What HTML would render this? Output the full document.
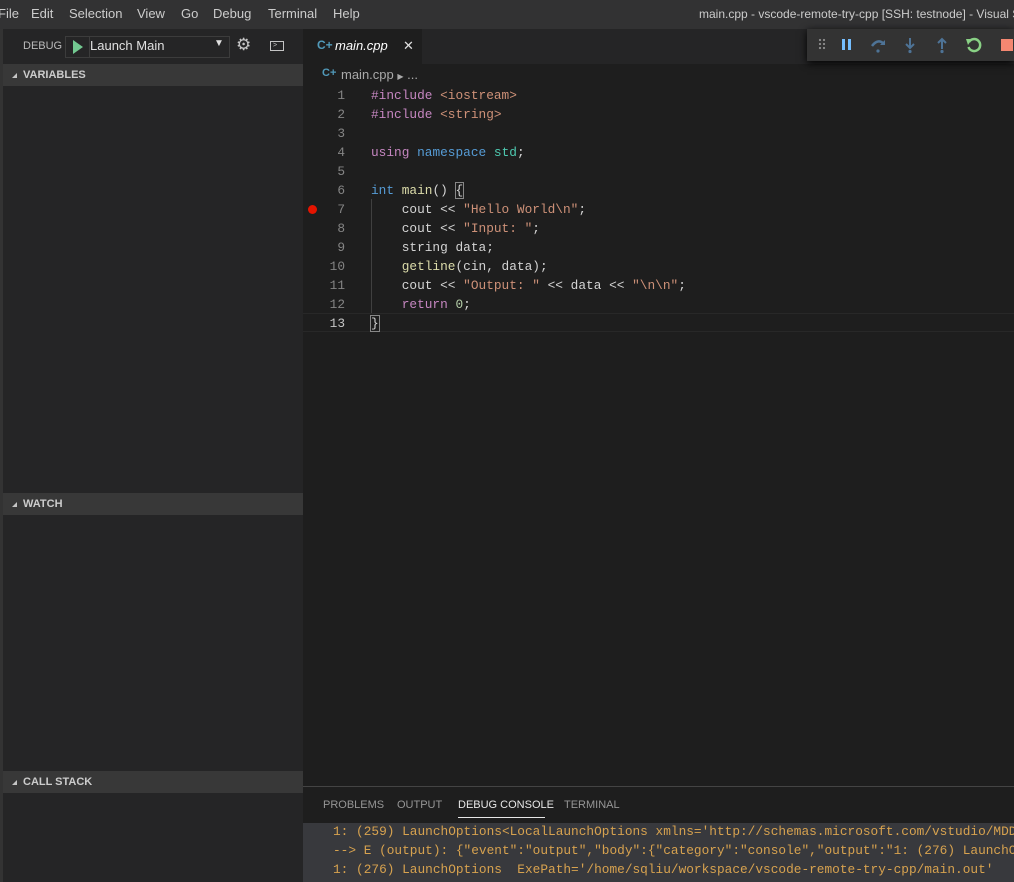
<!DOCTYPE html>
<html><head><meta charset="utf-8"><style>
*{margin:0;padding:0;box-sizing:border-box}
body{width:1014px;height:882px;overflow:hidden;background:#1e1e1e;font-family:"Segoe UI","Liberation Sans",sans-serif;position:relative}
.abs{position:absolute}
#title{left:0;top:0;width:1014px;height:29px;background:#323233;color:#cccccc;font-size:13px;overflow:hidden}
#title span{position:absolute;top:6px;white-space:nowrap}
#strip{left:0;top:29px;width:3px;height:853px;background:#333333}
#side{left:3px;top:29px;width:300px;height:853px;background:#252526}
.hdr{position:absolute;left:0;width:300px;height:22px;background:#383838;color:#cccccc;font-size:11px;font-weight:bold}
.hdr .tri{position:absolute;left:9px;top:9px;width:0;height:0;border-left:5px solid transparent;border-bottom:5px solid #c5c5c5}
.hdr .t{position:absolute;left:20px;top:5px}
#tabbar{left:303px;top:29px;width:711px;height:35px;background:#252526}
#tab{left:303px;top:29px;width:119px;height:35px;background:#1e1e1e}
.code{font-family:"Liberation Mono",monospace;font-size:12.8px;white-space:pre;line-height:19px}
.ln{position:absolute;left:303px;width:42px;text-align:right;color:#858585}
.cl{position:absolute;left:371px;color:#d4d4d4}
.pp{color:#c586c0}.inc{color:#ce9178}.kw{color:#569cd6}.ty{color:#4ec9b0}.fn{color:#dcdcaa}.st{color:#ce9178}.num{color:#b5cea8}
#panel{left:303px;top:786px;width:711px;height:96px;background:#1e1e1e;border-top:1px solid #444}
.ptab{position:absolute;top:12px;font-size:11px;color:#969696}
#cons{left:303px;top:823px;width:711px;height:59px;background:#38393d}
.cline{position:absolute;left:333px;color:#d7a24f;font-family:"Liberation Mono",monospace;font-size:12.8px;white-space:pre}
#dbg{left:807px;top:29px;width:207px;height:32px;background:#333333;box-shadow:0 2px 8px #000}
</style></head><body>
<div id="title" class="abs">
<span style="left:-2px">File</span><span style="left:31px">Edit</span><span style="left:69px">Selection</span><span style="left:137px">View</span><span style="left:181px">Go</span><span style="left:213px">Debug</span><span style="left:268px">Terminal</span><span style="left:333px">Help</span>
<span style="left:699px;font-size:12px;top:7px">main.cpp - vscode-remote-try-cpp [SSH: testnode] - Visual S</span>
</div>
<div id="strip" class="abs"></div>
<div id="side" class="abs">
 <div class="abs" style="left:20px;top:11px;font-size:11px;color:#bbbbbb">DEBUG</div>
 <div class="abs" style="left:62px;top:7px;width:165px;height:22px;border:1px solid #3c3c3c;background:#252526"></div>
 <div class="abs" style="left:86px;top:8px;width:1px;height:20px;background:#3c3c3c"></div>
 <div class="abs" style="left:70px;top:11px;width:0;height:0;border-top:7px solid transparent;border-bottom:7px solid transparent;border-left:10px solid #73c991"></div>
 <div class="abs" style="left:87px;top:9px;font-size:13px;color:#e0e0e0">Launch Main</div>
 <div class="abs" style="left:211px;top:9px;font-size:10px;color:#e0e0e0">▼</div>
 <div class="abs" style="left:233px;top:6px;font-size:17px;color:#c5c5c5">⚙</div>
 <div class="abs" style="left:267px;top:12px;width:14px;height:10px;border:1px solid #c5c5c5;font-size:7px;color:#c5c5c5;line-height:8px;padding-left:2px">&gt;</div>
 <div class="hdr" style="top:35px"><div class="tri"></div><div class="t">VARIABLES</div></div>
 <div class="hdr" style="top:464px"><div class="tri"></div><div class="t">WATCH</div></div>
 <div class="hdr" style="top:742px"><div class="tri"></div><div class="t">CALL STACK</div></div>
</div>
<div id="tabbar" class="abs"></div>
<div id="tab" class="abs">
 <div class="abs" style="left:14px;top:9px;font-size:12px;color:#519aba;font-weight:bold">C+</div>
 <div class="abs" style="left:32px;top:9px;font-size:13px;color:#ffffff;font-style:italic">main.cpp</div>
 <div class="abs" style="left:100px;top:9px;font-size:13px;color:#e0e0e0">✕</div>
</div>
<div class="abs" style="left:322px;top:67px;font-size:11px;color:#519aba;font-weight:bold">C+</div>
<div class="abs" style="left:341px;top:67px;font-size:13px;color:#a9a9a9">main.cpp <span style="font-size:8px">▶</span> ...</div>
<div id="dbg" class="abs">
 <div class="abs" style="left:11px;top:9px;width:8px;height:12px;background:radial-gradient(circle,#888 1px,transparent 1.3px) 0 0/4px 4px"></div>
 <div class="abs" style="left:35px;top:10px;width:3px;height:11px;background:#75beff"></div>
 <div class="abs" style="left:41px;top:10px;width:3px;height:11px;background:#75beff"></div>
 <svg class="abs" style="left:62px;top:7px" width="18" height="18"><path d="M3 10 Q9 2 15 8" stroke="#4e7396" stroke-width="2.5" fill="none"/><path d="M11 9 L16 9 L16 4" fill="#4e7396"/><circle cx="9" cy="15" r="1.6" fill="#4e7396"/></svg>
 <svg class="abs" style="left:96px;top:7px" width="14" height="18"><path d="M7 2 V11 M3 8 L7 12 L11 8" stroke="#4e7396" stroke-width="2" fill="none"/><circle cx="7" cy="15.5" r="1.6" fill="#4e7396"/></svg>
 <svg class="abs" style="left:128px;top:7px" width="14" height="18"><path d="M7 13 V3 M3 7 L7 3 L11 7" stroke="#4e7396" stroke-width="2" fill="none"/><circle cx="7" cy="15.5" r="1.6" fill="#4e7396"/></svg>
 <svg class="abs" style="left:158px;top:7px" width="18" height="18"><path d="M4 6 A6 6 0 1 1 3.5 11" stroke="#89d185" stroke-width="2.5" fill="none"/><path d="M1 3 L7 3 L3 9 Z" fill="#89d185"/></svg>
 <div class="abs" style="left:194px;top:10px;width:12px;height:12px;background:#f48771"></div>
</div>
<div class="abs" style="left:303px;top:313px;width:711px;height:19px;border-top:1px solid #282828;border-bottom:1px solid #282828"></div>
<div class="abs" style="left:371px;top:199px;width:1px;height:114px;background:#404040"></div>
<div class="abs" style="left:308px;top:205px;width:9px;height:9px;border-radius:50%;background:#e51400"></div>
<div class="code">
<div class="ln" style="top:86px">1</div><div class="ln" style="top:105px">2</div><div class="ln" style="top:124px">3</div><div class="ln" style="top:143px">4</div><div class="ln" style="top:162px">5</div><div class="ln" style="top:181px">6</div><div class="ln" style="top:200px">7</div><div class="ln" style="top:219px">8</div><div class="ln" style="top:238px">9</div><div class="ln" style="top:257px">10</div><div class="ln" style="top:276px">11</div><div class="ln" style="top:295px">12</div><div class="ln" style="top:314px;color:#c6c6c6">13</div>
<div class="cl" style="top:86px"><span class="pp">#include</span> <span class="inc">&lt;iostream&gt;</span></div>
<div class="cl" style="top:105px"><span class="pp">#include</span> <span class="inc">&lt;string&gt;</span></div>
<div class="cl" style="top:143px"><span class="pp">using</span> <span class="kw">namespace</span> <span class="ty">std</span>;</div>
<div class="cl" style="top:181px"><span class="kw">int</span> <span class="fn">main</span>() <span style="outline:1px solid #888">{</span></div>
<div class="cl" style="top:200px">    cout &lt;&lt; <span class="st">"Hello World\n"</span>;</div>
<div class="cl" style="top:219px">    cout &lt;&lt; <span class="st">"Input: "</span>;</div>
<div class="cl" style="top:238px">    string data;</div>
<div class="cl" style="top:257px">    <span class="fn">getline</span>(cin, data);</div>
<div class="cl" style="top:276px">    cout &lt;&lt; <span class="st">"Output: "</span> &lt;&lt; data &lt;&lt; <span class="st">"\n\n"</span>;</div>
<div class="cl" style="top:295px">    <span class="pp">return</span> <span class="num">0</span>;</div>
<div class="cl" style="top:314px"><span style="outline:1px solid #888">}</span></div>
</div>
<div id="panel" class="abs">
 <div class="ptab" style="left:20px">PROBLEMS</div>
 <div class="ptab" style="left:94px">OUTPUT</div>
 <div class="ptab" style="left:155px;color:#e7e7e7">DEBUG CONSOLE</div>
 <div class="abs" style="left:155px;top:30px;width:87px;height:1px;background:#e7e7e7"></div>
 <div class="ptab" style="left:261px">TERMINAL</div>
</div>
<div id="cons" class="abs"></div>
<div class="cline" style="top:824px">1: (259) LaunchOptions&lt;LocalLaunchOptions xmlns='http://schemas.microsoft.com/vstudio/MDD</div>
<div class="cline" style="top:843px">--&gt; E (output): {"event":"output","body":{"category":"console","output":"1: (276) LaunchO</div>
<div class="cline" style="top:862px">1: (276) LaunchOptions  ExePath='/home/sqliu/workspace/vscode-remote-try-cpp/main.out'</div>
</body></html>
